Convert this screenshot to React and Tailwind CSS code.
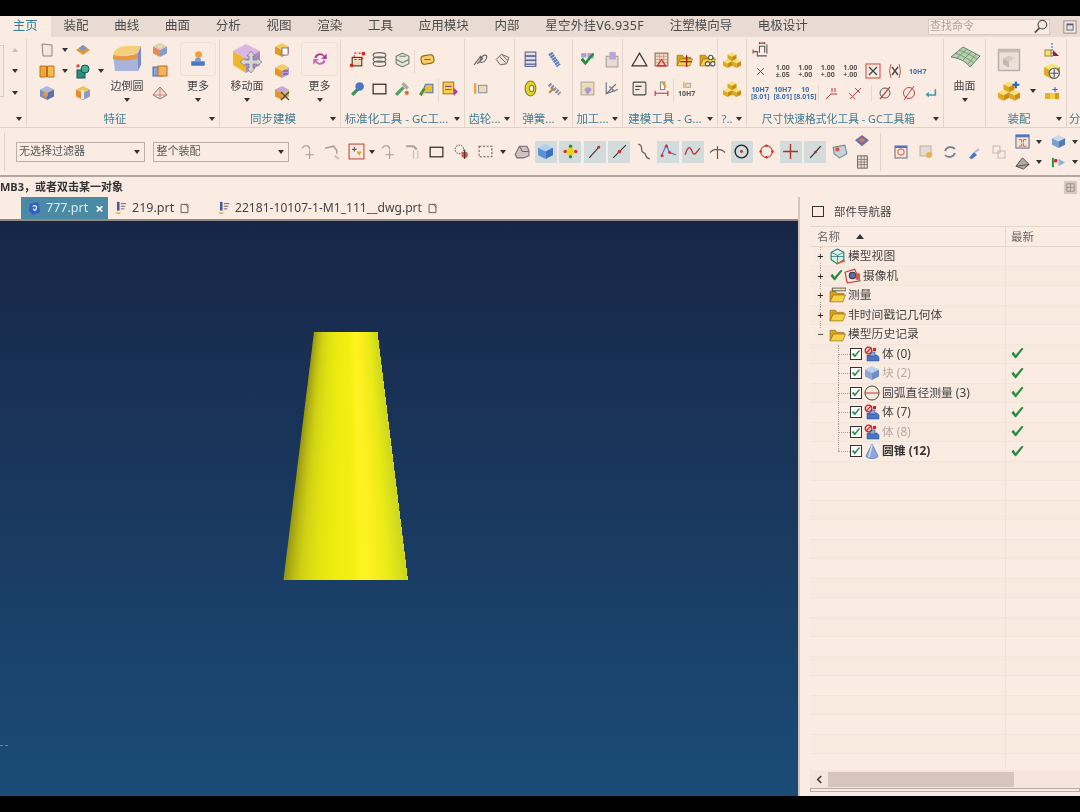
import React from "react"

// isometric cube used all over the ribbon
const cube = (t, l, r) => (
  <>
    <polygon points="8,1 15,4.5 8,8 1,4.5" fill={t} />
    <polygon points="1,4.5 8,8 8,15 1,11.5" fill={l} />
    <polygon points="8,8 15,4.5 15,11.5 8,15" fill={r} />
  </>
)
const goldCubes = (
  <>
    <polygon points="8,1 12,3 8,5 4,3" fill="#f6e27a" /><polygon points="4,3 8,5 8,9 4,7" fill="#e0a820" /><polygon points="8,5 12,3 12,7 8,9" fill="#c98e10" />
    <polygon points="4,7 8,9 4,11 0,9" fill="#f6e27a" /><polygon points="0,9 4,11 4,15 0,13" fill="#e0a820" /><polygon points="4,11 8,9 8,13 4,15" fill="#c98e10" />
    <polygon points="12,7 16,9 12,11 8,9" fill="#f6e27a" /><polygon points="8,9 12,11 12,15 8,13" fill="#e0a820" /><polygon points="12,11 16,9 16,13 12,15" fill="#c98e10" />
  </>
)
const check = <path d="M2 8.5 L6 13 L14 3 L12.5 2.5 L6 10 L3.5 6.5 Z" fill="#1f8a3c" stroke="#1f8a3c" strokeWidth="0.8" />
const folder = (
  <>
    <path d="M1 14 V4 H6 L7.5 6 H14 V8 H4.5 Z" fill="#d9a21b" stroke="#8a6410" strokeWidth="0.6" />
    <path d="M1 14 L4 7.5 H15.5 L13 14 Z" fill="#f7d048" stroke="#8a6410" strokeWidth="0.6" />
  </>
)
const bodyIcon = (
  <>
    <path d="M3 9 H13 L15 11 V15 H3 Z" fill="#4a76c4" stroke="#26457f" strokeWidth="0.5" />
    <rect x="6" y="6" width="5" height="4" fill="#8aa8dc" stroke="#26457f" strokeWidth="0.5" />
    <circle cx="4.5" cy="4.5" r="3.3" fill="none" stroke="#d92020" strokeWidth="1.3" />
    <path d="M2 7 L7 2" stroke="#d92020" strokeWidth="1.2" />
    <rect x="9" y="2" width="3" height="3" fill="#d92020" />
  </>
)

const icons = {
  sheet: <path d="M3 2 L13 3 V14 L4 14 Z" fill="#f4e6de" stroke="#8c8480" />,
  gem: <><polygon points="8,3 15,8 8,13 1,8" fill="#d99b3d" /><polygon points="8,3 12,6 8,9 4,6" fill="#7d93c9" /></>,
  book: <><path d="M1 3 H7.5 V14 H1 Z" fill="#f0a830" stroke="#b8701a" /><path d="M8.5 3 H15 V14 H8.5 Z" fill="#f5bd55" stroke="#b8701a" /></>,
  target: <><rect x="2" y="7" width="8" height="8" fill="#2d8c83" stroke="#14544e" /><circle cx="10" cy="6" r="4" fill="#49b08f" stroke="#14544e" /><path d="M1 3 H5 M3 1 V5" stroke="#d92020" /></>,
  blueBox: <>{cube("#a9b9e0", "#7c8fc6", "#5c70ad")}<circle cx="6.5" cy="9.5" r="2.5" fill="#e9963a" /></>,
  halfBox: <>{cube("#f0c25a", "#e58c35", "#8b9bc7")}<rect x="6" y="5" width="3" height="9" fill="#fbece3" /></>,
  tray: <>{cube("#d6c8c2", "#e58c55", "#8b9bc7")}<polygon points="4,4.5 8,2.8 12,4.5 8,6.5" fill="#f5dc9a" /></>,
  frame: <><rect x="1" y="4" width="9" height="9" fill="#8ba3d6" stroke="#50689f" /><rect x="6" y="3" width="9" height="10" fill="#f2b25a" stroke="#b8701a" /></>,
  pyramid: <><polygon points="8,2 15,10 8,14 1,10" fill="#f2ded4" stroke="#8c7f7a" /><path d="M8 2 V14 M1 10 L15 10" stroke="#c06a50" strokeWidth="0.7" /></>,
  stamp: <><rect x="2" y="10" width="12" height="4" fill="#4a76c4" /><path d="M5 10 L6 7 H10 L11 10 Z" fill="#7f9bd3" /><circle cx="8.5" cy="4" r="3" fill="#eda035" /></>,
  yCube: <>{cube("#f4cb63", "#e09a24", "#cf8ed0")}<rect x="8" y="6" width="6" height="7" fill="#fdfdfb" stroke="#5c5c5c" strokeWidth="0.7" /></>,
  yCube2: <>{cube("#f4cb63", "#e09a24", "#b99ad6")}<path d="M9 8 H14 M9 11 H14" stroke="#555" /></>,
  xCube: <>{cube("#c6a6da", "#e09a24", "#d9b565")}<path d="M7 7 L15 15 M15 7 L7 15" stroke="#444" strokeWidth="1.2" /></>,
  loop: <><path d="M3 7 A5 5 0 0 1 12 5 L14 3 V8 H9 L11 6 A3.5 3.5 0 0 0 5 7 Z" fill="#b0409c" /><path d="M13 9 A5 5 0 0 1 4 11 L2 13 V8 H7 L5 10 A3.5 3.5 0 0 0 11 9 Z" fill="#c66bb5" /></>,
  bracket: <><rect x="3" y="6" width="9" height="8" fill="#f7d9b8" stroke="#333" /><rect x="5" y="2" width="8" height="6" fill="none" stroke="#d92020" strokeDasharray="2 2" /><rect x="1" y="12" width="3" height="3" fill="#d92020" /><rect x="12" y="1" width="3" height="3" fill="#d92020" /></>,
  layers: <g fill="none" stroke="#666" strokeWidth="1.1"><ellipse cx="8" cy="4" rx="6" ry="2.5" /><ellipse cx="8" cy="8" rx="6" ry="2.5" /><ellipse cx="8" cy="12" rx="6" ry="2.5" /></g>,
  layers2: <g fill="#e4e6d8" stroke="#6c7d70"><path d="M2 5 L8 2 L14 5 V12 L8 15 L2 12 Z" /><path d="M2 8 L8 11 L14 8 M5 5 H11" fill="none" /></g>,
  tag: <><rect x="2" y="4" width="12" height="8" rx="3" fill="#f6cf66" stroke="#8a6410" transform="rotate(-10 8 8)" /><path d="M5 8 H11" stroke="#8a6410" /></>,
  wrench: <><path d="M3 14 L9 8" stroke="#3f8f4e" strokeWidth="3" /><circle cx="10" cy="6" r="4" fill="#4a76c4" /></>,
  rect: <rect x="2" y="4" width="12" height="9" fill="#fbece3" stroke="#333" strokeWidth="1.2" />,
  tool: <><path d="M2 14 L9 7" stroke="#54a062" strokeWidth="3" /><path d="M8 3 L13 8" stroke="#aaa" strokeWidth="3" /><circle cx="12" cy="12" r="2" fill="#d96d30" /></>,
  flag: <><path d="M3 15 L7 4 H14 V12 H7" fill="#e6c02d" stroke="#4a76c4" /><path d="M2 14 L6 8" stroke="#3f8f4e" strokeWidth="2.5" /></>,
  sign: <><rect x="1" y="2" width="10" height="11" fill="#f7d048" stroke="#a07a20" /><path d="M3 6 H9 M3 9 H9" stroke="#8c4aa0" /><polygon points="11,7 15,11 11,15" fill="#b0409c" /></>,
  pen: <path d="M2 13 L8 5 L10 7 L5 12 M7 10 C10 3 13 3 14 5 C14 9 10 12 7 10" fill="none" stroke="#666" strokeWidth="1.1" />,
  feather: <path d="M2 8 L7 3 L14 6 L12 12 L6 13 Z M5 5 L11 11 M8 4 L13 9" fill="#eee2da" stroke="#666" strokeWidth="0.9" />,
  gear: <><rect x="2" y="3" width="2" height="10" fill="#e7a13a" /><rect x="6" y="5" width="8" height="7" fill="#f0d9b0" stroke="#8791ad" /></>,
  coil: <><ellipse cx="8" cy="8" rx="5" ry="7" fill="#e6d426" stroke="#8a7a10" /><ellipse cx="9" cy="8" rx="2" ry="3" fill="#fff" stroke="#8a7a10" /></>,
  stack: <g fill="#dfe2ee" stroke="#59628a"><rect x="3" y="1" width="10" height="3.5" /><rect x="3" y="5" width="10" height="3.5" /><rect x="3" y="9" width="10" height="3.5" /><rect x="3" y="12.5" width="10" height="2" /></g>,
  spring: <path d="M4 2 L12 14" stroke="#5a7cc0" strokeWidth="4.5" strokeDasharray="2 0.6" />,
  plug: <><path d="M3 4 L13 13" stroke="#8c8ca0" strokeWidth="4" strokeDasharray="2 1" /><path d="M3 12 L7 8" stroke="#c08040" strokeWidth="2" /></>,
  checkShape: <><rect x="8" y="2" width="6" height="5" fill="#a99bd6" /><rect x="2" y="2" width="5" height="4" fill="#a99bd6" />{check}</>,
  doc2: <><rect x="3" y="5" width="11" height="10" fill="#e6dcd6" stroke="#a79d99" /><rect x="6" y="1" width="6" height="7" fill="#b6a6d8" /></>,
  doc3: <><rect x="2" y="2" width="12" height="12" fill="#ecdcb8" stroke="#b0a49a" /><path d="M5 9 C7 6 10 6 12 9 L8 14 Z" fill="#a99bd6" /></>,
  axes: <><path d="M3 2 V13 L14 9 M3 13 L12 4" fill="none" stroke="#5c6f70" /><path d="M6 6 L11 11" stroke="#8c7fb6" strokeWidth="1.5" /></>,
  triangle: <polygon points="8,2 15,14 1,14" fill="none" stroke="#333" strokeWidth="1.1" />,
  table: <><rect x="2" y="2" width="12" height="12" fill="#f4d9c7" stroke="#7a6a60" /><path d="M2 5 H14 M2 8 H14 M2 11 H14 M6 2 V14 M10 2 V14" stroke="#b98870" strokeWidth="0.6" /><polygon points="8,8 12,14 4,14" fill="none" stroke="#d92020" /></>,
  foldPlus: <>{folder}<path d="M10 4 V15 M4 10 H15" stroke="#a02020" strokeWidth="1.3" /></>,
  foldTree: <>{folder}<circle cx="11" cy="6" r="2" fill="#fff" stroke="#555" /><circle cx="8" cy="12" r="2" fill="#fff" stroke="#555" /><circle cx="13" cy="12" r="2" fill="#fff" stroke="#555" /></>,
  gold: goldCubes,
  goldPlus: <>{goldCubes}<path d="M13 1 V6 M10.5 3.5 H15.5" stroke="#2a62c0" strokeWidth="1.5" /></>,
  note: <><rect x="2" y="2" width="12" height="12" rx="1" fill="#f2e8e0" stroke="#444" /><path d="M4 6 H10 M4 9 H8" stroke="#444" /></>,
  measure: <><rect x="7" y="2" width="4" height="7" fill="#fff" stroke="#888" /><path d="M9 2 L12 7" stroke="#e2a030" strokeWidth="2" /><path d="M2 10 V15 M14 10 V15 M2 12.5 H14" stroke="#c03030" /></>,
  lines: <><path d="M1 10 H5 V14 H14 M7 11 V5 H12 V11 M7 2 H12 M14 3 V12" fill="none" stroke="#555" /><path d="M7 1 V3 M12 1 V3 M1 8 V12" stroke="#c03030" /></>,
  cross: <path d="M3 3 L13 13 M13 3 L3 13" stroke="#444" strokeWidth="1.3" />,
  xBox: <><rect x="1" y="1" width="14" height="14" fill="none" stroke="#c65a4a" strokeWidth="1.1" /><path d="M4 4 L12 12 M12 4 L4 12" stroke="#444" strokeWidth="1.3" /></>,
  xParen: <><path d="M4 1 Q1 8 4 15 M12 1 Q15 8 12 15" fill="none" stroke="#c65a4a" /><path d="M5 4 L11 12 M11 4 L5 12" stroke="#444" strokeWidth="1.3" /></>,
  dim: <><path d="M3 14 L8 9 H14" fill="none" stroke="#c03030" /><path d="M9 3 L9 7 M12 3 L12 7" stroke="#c03030" /></>,
  dimSlash: <path d="M3 14 L14 3 M2 8 L8 14 M8 3 L13 8" fill="none" stroke="#c04040" />,
  diaRed: <><circle cx="8" cy="8" r="5" fill="none" stroke="#555" /><path d="M3 14 L13 2" stroke="#c04040" strokeWidth="1.2" /></>,
  diaPink: <><circle cx="8" cy="8" r="5.5" fill="none" stroke="#c04040" /><path d="M3 15 L13 1" stroke="#c04040" /></>,
  back: <path d="M13 4 V10 H6 V7 L2 10.5 L6 14 V12 H15 V4 Z" fill="#4b93a8" />,
  greyDoc: <><rect x="1" y="1" width="14" height="14" fill="#ebe0da" stroke="#b9aea8" /><rect x="1" y="1" width="14" height="2" fill="#c9bcb6" /><polygon points="8,5 12,7 8,9 4,7" fill="#d6cbc5" /><polygon points="4,7 8,9 8,13 4,11" fill="#c4b8b2" /></>,
  mirror: <><path d="M8 1 V15" stroke="#2a62c0" strokeDasharray="2 1" /><rect x="1" y="8" width="6" height="6" fill="#f6e27a" stroke="#9c8a20" /><polygon points="9,14 15,14 9,8" fill="#a02020" /></>,
  moveAsm: <>{cube("#f6e27a", "#e0a820", "#c98e10")}<circle cx="10" cy="10" r="4.5" fill="#eee" stroke="#555" /><path d="M10 6.5 V13.5 M6.5 10 H13.5" stroke="#555" /></>,
  smallGold: <><rect x="1" y="8" width="5" height="6" fill="#e9b02a" /><rect x="6" y="8" width="5" height="6" fill="#f4ca55" /><rect x="11" y="8" width="4" height="6" fill="#d49a18" /><path d="M11 2 V7 M8.5 4.5 H13.5" stroke="#2a62c0" /></>,
  hook: <><path d="M2 5 L10 3 L13 7 V10" fill="none" stroke="#ad9e98" strokeWidth="1.4" /><path d="M11 12 L15 15" stroke="#cbbeb8" strokeWidth="2" /></>,
  filterBox: <><rect x="1" y="1" width="14" height="14" fill="#f8e8df" stroke="#c04a3a" /><path d="M4 6 H8 M6 4 V8" stroke="#555" /><polygon points="8,8 13,8 10.5,12" fill="#d8a828" /></>,
  curlPlus: <><path d="M3 5 C5 1 10 2 10 6" fill="none" stroke="#b0a49e" strokeWidth="1.3" /><path d="M10 7 V15 M6 11 H14" stroke="#a69a94" /></>,
  hammer: <><path d="M2 3 H9 L12 6" stroke="#b0a49e" strokeWidth="2" fill="none" /><path d="M9 7 V15 M13 7 V15" stroke="#c5b9b3" /></>,
  dotRect: <><circle cx="6" cy="6" r="4" fill="none" stroke="#777" strokeDasharray="1.5 1" /><circle cx="11" cy="11" r="3" fill="#d85a3a" /><path d="M11 6 V15" stroke="#333" /></>,
  dashRect: <rect x="2" y="3" width="12" height="10" fill="none" stroke="#5f5f5f" strokeDasharray="2 1.5" />,
  pill: <><path d="M2 11 L6 3 H13 L15 7 V12 L10 14 H4 Z" fill="#cfc3c0" stroke="#6f6a72" /><path d="M6 3 L9 8 H15" fill="none" stroke="#6f6a72" /></>,
  cube: cube("#b2cdf0", "#5a90d6", "#3c70bc"),
  nodes: <><polygon points="8,3 13,8 8,13 3,8" fill="#e9d21c" /><g fill="#d03030"><circle cx="3" cy="8" r="1.6" /><circle cx="13" cy="8" r="1.6" /></g><g fill="#2a8c40"><circle cx="8" cy="3" r="1.6" /><circle cx="8" cy="13" r="1.6" /></g></>,
  lineEnd: <><path d="M3 14 L13 3" stroke="#333" /><circle cx="12" cy="4" r="1.4" fill="#d03030" /></>,
  lineMid: <><path d="M2 14 L14 2" stroke="#333" /><circle cx="8" cy="8" r="1.7" fill="#d03030" /></>,
  squiggle: <path d="M3 1 C9 2 4 8 8 9 C12 10 8 14 14 15" fill="none" stroke="#6c5c5a" strokeWidth="1.2" />,
  zig: <><path d="M1 13 L6 2 L9 9 L15 11" fill="none" stroke="#5567b0" /><g fill="#d03030"><circle cx="6" cy="3" r="1.4" /><circle cx="9" cy="9" r="1.4" /><circle cx="2" cy="12" r="1.4" /></g></>,
  wave: <path d="M1 11 C4 2 6 3 8 9 C10 13 12 8 15 5" fill="none" stroke="#c03030" strokeWidth="1.3" />,
  branch: <path d="M8 15 V3 M1 9 C4 5 12 5 15 9" fill="none" stroke="#6c5c5a" strokeWidth="1.2" />,
  centerDot: <><circle cx="8" cy="8" r="6" fill="none" stroke="#222" strokeWidth="1.3" /><circle cx="8" cy="8" r="1.4" fill="#c03030" /></>,
  circleDots: <><circle cx="8" cy="8" r="5.5" fill="none" stroke="#d85040" strokeWidth="1.2" /><g fill="#c03030"><circle cx="8" cy="2.5" r="1.2" /><circle cx="8" cy="13.5" r="1.2" /><circle cx="2.5" cy="8" r="1.2" /><circle cx="13.5" cy="8" r="1.2" /></g></>,
  plus: <path d="M8 1 V15 M1 8 H15" stroke="#b03020" strokeWidth="1.3" />,
  lineRed: <><path d="M3 14 L13 3" stroke="#333" strokeWidth="1.2" /><circle cx="8" cy="8.5" r="1.3" fill="#b03020" /></>,
  wedge: <><path d="M2 4 L13 2 L15 10 L8 14 L3 10 Z" fill="#c4d2e0" stroke="#78848c" /><circle cx="6" cy="6" r="2" fill="#d85a3a" /></>,
  panel: <><polygon points="8,1 16,7 8,14 0,7" fill="#6f6fa8" /><polygon points="8,4 12,7 8,10 4,7" fill="#d07a5a" /></>,
  mesh: <><rect x="3" y="1" width="11" height="14" fill="#f2e2d8" stroke="#555" /><path d="M3 5 H14 M3 8 H14 M3 11 H14 M7 1 V15 M10.5 1 V15" stroke="#555" strokeWidth="0.7" /></>,
  viewZoom: <><rect x="2" y="2" width="12" height="12" fill="#f5e5dc" stroke="#6a6a80" /><circle cx="8" cy="8" r="3.2" fill="none" stroke="#d85a3a" /><rect x="2" y="2" width="12" height="2" fill="#4a76c4" /></>,
  viewHand: <><rect x="2" y="2" width="11" height="10" fill="#e4dcd4" stroke="#b9aea8" /><circle cx="11" cy="11" r="3" fill="#eab24a" /></>,
  refresh: <path d="M13 5 A6 6 0 0 0 3 7 M3 11 A6 6 0 0 0 13 9" fill="none" stroke="#6f7f8c" strokeWidth="1.8" />,
  brush: <><path d="M2 14 L7 8 L10 11 L5 15 Z" fill="#4a76c4" /><path d="M8 8 L12 5" stroke="#b0b8c8" strokeWidth="2" /></>,
  faint: <><rect x="2" y="2" width="7" height="7" fill="none" stroke="#c4b8b2" /><rect x="7" y="7" width="7" height="7" fill="none" stroke="#c4b8b2" /></>,
  viewGrid: <><rect x="1" y="1" width="14" height="14" fill="#f5e3d4" stroke="#4a5f9c" /><rect x="1" y="1" width="14" height="2.5" fill="#4a76c4" /><path d="M4 6 H7 V9 M12 6 H9 V9 M4 13 H7 V10 M12 13 H9 V10" fill="none" stroke="#d85a3a" /></>,
  shaded: cube("#c9d9ec", "#7aa0d0", "#4f7cb8"),
  wedgeGrey: <><path d="M1 12 L8 3 L15 10 L9 15 Z" fill="#b0a8a2" stroke="#55504c" /><path d="M1 12 L9 11 L15 10" fill="none" stroke="#55504c" /></>,
  orient: <><polygon points="8,4 15,8 8,12" fill="#8fb0dc" /><path d="M2 3 V13" stroke="#2a8c40" strokeWidth="2" /><circle cx="5" cy="6" r="2" fill="#d03030" /></>,
  body: bodyIcon,
  check,
  folder,
  block: cube("#bccfec", "#8aa7d6", "#6d8dc4"),
  view: <><path d="M8 1 L14 4 V11 L8 15 L2 11 V4 Z" fill="#d8f0e6" stroke="#1c7a70" /><path d="M2 4 L8 7 L14 4 M8 7 V15 M2 8 L14 8" fill="none" stroke="#1c7a70" strokeWidth="0.7" /><path d="M7 15 L15 12" stroke="#e25a20" strokeWidth="1.3" /></>,
  camera: <><path d="M1 5 L10 2 L15 13 L3 15 Z" fill="#f8e8df" stroke="#c03030" /><circle cx="8" cy="8" r="3" fill="#5a70b0" stroke="#333" /><rect x="11" y="6" width="4" height="6" fill="#d85a3a" /></>,
  ruler: <>{folder}<rect x="3" y="1" width="13" height="2.6" fill="#f4e6b0" stroke="#333" strokeWidth="0.7" /></>,
  arcDia: <><circle cx="8" cy="8" r="7" fill="none" stroke="#444" /><path d="M1.5 8 H14.5" stroke="#c03030" /></>,
  cone: <><path d="M8 1 L14 13 A6 2.5 0 0 1 2 13 Z" fill="#8aa7d6" stroke="#6d8dc4" /><path d="M8 2 L5 14" stroke="#d4e0f2" strokeWidth="1.4" /></>,
  partTab: <><path d="M3 3 L12 1 L14 12 L6 15 L2 10 Z" fill="#2f62c0" /><path d="M6 6 C8 4 11 5 10 8 C9 11 7 10 7 8" fill="none" stroke="#e2ecf8" strokeWidth="1.4" /></>,
  drawTab: <><path d="M6 1 V11" stroke="#4a5aa0" strokeWidth="3" /><path d="M9 3 H15 M9 6 H14 M9 9 H13" stroke="#555" /><path d="M2 13 H10 L6 15 Z" fill="#d8a828" /></>,
  openDoc: <><path d="M3 2 H9 L13 6 V14 H3 Z" fill="none" stroke="#444" strokeWidth="1.2" /><path d="M8 2 L13 2 M13 2 V7" stroke="#444" /></>,
  search: <><circle cx="10" cy="6" r="4.6" fill="#f4e6de" stroke="#555" strokeWidth="1.3" /><path d="M7 9.5 L2 14.5" stroke="#555" strokeWidth="2" /></>,
  win: <><rect x="1" y="1" width="14" height="14" fill="#f4e6de" stroke="#8c8480" /><rect x="4" y="4" width="8" height="8" fill="#46607c" /><rect x="5" y="6" width="6" height="5" fill="#e8dcd4" /></>,
  checkFlag: <><rect x="1" y="1" width="14" height="14" fill="#d6c8c2" /><path d="M4 4 H12 V12 H4 Z M4 8 H12 M8 4 V12" stroke="#9c908a" fill="none" /></>,
}

const Ic = ({ n, s = 16 }) => (
  <svg viewBox="0 0 16 16" width={s} height={s} className="shrink-0">{icons[n]}</svg>
)

const Arrow = () => <span className="w-0 h-0 border-x-[3px] border-x-transparent border-t-[4px] border-t-[#333]" />

// one icon cell in a ribbon column (three rows of 21.5px or two rows of 29px)
const C3 = ({ n, s }) => <div className="h-[21.5px] flex items-center justify-center">{n && <Ic n={n} s={s} />}</div>
const C2 = ({ n, s = 17 }) => <div className="h-[29px] flex items-center justify-center">{n && <Ic n={n} s={s} />}</div>
const A3 = () => <div className="h-[21.5px] flex items-center justify-center"><Arrow /></div>
const Sep = () => <div className="h-[23px] mt-[3px] border-l border-[#e6d8cf]" />

const Group = ({ width, label, labelClass = "", last, children }) => (
  <div className={`${width} shrink-0 flex flex-col ${last ? "" : "border-r border-[#e3d5cc]"}`}>
    <div className="h-[72px] flex">{children}</div>
    <div className="h-[16px] flex items-center text-[11.5px] text-[#3f7c92] whitespace-nowrap overflow-hidden">
      <span className={`flex-1 text-center ${labelClass}`}>{label}</span>
      <span className="mr-[4px] flex"><Arrow /></span>
    </div>
  </div>
)

const Caption = ({ text }) => (
  <>
    <div className="h-[14px] flex items-center justify-center text-[11px] text-[#444] whitespace-nowrap">{text}</div>
    <div className="h-[14px] flex items-center justify-center"><Arrow /></div>
  </>
)

const More = ({ n, width }) => (
  <div className={`${width} shrink-0`}>
    <div className="mt-[3px] mb-[3px] h-[34px] border border-[#eee0d8] rounded-[3px] flex items-center justify-center"><Ic n={n} s={18} /></div>
    <Caption text="更多" />
  </div>
)

const Dim = ({ a, b, c = "text-[#555]" }) => (
  <div className={`w-[22.5px] shrink-0 text-center leading-[7px] text-[7px] font-bold whitespace-nowrap ${c}`}>{a}<br />{b}</div>
)

const tabs = ["主页", "装配", "曲线", "曲面", "分析", "视图", "渲染", "工具", "应用模块", "内部", "星空外挂V6.935F", "注塑模向导", "电极设计"]

const selIcons = [
  ["curlPlus"], ["hook"], ["filterBox"], "a", ["curlPlus"], ["hammer"], ["rect"], ["dotRect"], ["dashRect"], "b",
  ["pill"], ["cube", 1], ["nodes", 1], ["lineEnd", 1], ["lineMid", 1], ["squiggle"], ["zig", 1], ["wave", 1], ["branch"],
  ["centerDot", 1], ["circleDots"], ["plus", 1], ["lineRed", 1], ["wedge"],
]

const rows = [
  { kind: "top", icon: "view", text: "模型视图", open: false },
  { kind: "top", tick: true, icon: "camera", text: "摄像机" },
  { kind: "top", icon: "ruler", text: "测量" },
  { kind: "top", icon: "folder", text: "非时间戳记几何体" },
  { kind: "top", icon: "folder", text: "模型历史记录", open: true },
  { kind: "child", icon: "body", text: "体 (0)" },
  { kind: "child", icon: "block", text: "块 (2)", faint: true },
  { kind: "child", icon: "arcDia", text: "圆弧直径测量 (3)" },
  { kind: "child", icon: "body", text: "体 (7)" },
  { kind: "child", icon: "body", text: "体 (8)", faint: true },
  { kind: "child", icon: "cone", text: "圆锥 (12)", bold: true, end: true },
]

// colour stops across the cone, left silhouette to right silhouette
const coneStops = [
  [0, [150, 150, 18]], [0.06, [180, 180, 20]], [0.14, [208, 208, 20]], [0.26, [226, 226, 18]], [0.4, [238, 236, 16]],
  [0.56, [244, 238, 18]], [0.64, [255, 242, 36]], [0.72, [254, 238, 32]], [0.86, [232, 234, 24]], [1, [204, 214, 30]],
]
const coneColor = (t) => {
  let i = 0
  while (i < coneStops.length - 2 && t > coneStops[i + 1][0]) i++
  const [t0, c0] = coneStops[i]
  const [t1, c1] = coneStops[i + 1]
  const k = (t - t0) / (t1 - t0)
  return `rgb(${c0.map((v, j) => Math.round(v + (c1[j] - v) * k)).join(",")})`
}
const STRIPS = 50
const Cone = () => (
  <svg width="125" height="249" viewBox="0 0 125 249" className="block">
    {Array.from({ length: STRIPS }).map((_, i) => {
      const a = i / STRIPS
      return (
        <polygon
          key={i}
          points={`${31 + 63 * a},0 94,0 124.5,248 ${0.5 + 124 * a},248`}
          fill={coneColor(a + 0.5 / STRIPS)}
        />
      )
    })}
  </svg>
)

const TreeRow = ({ row, i }) => {
  const shade = i % 2 === 0 ? "bg-[#fbece3]" : "bg-[#f9eae0]"
  return (
    <div className={`h-[19.5px] flex border-b border-[#f3e3d9] ${shade}`}>
      <div className="w-[196px] shrink-0 flex items-center border-r border-[#f1e1d7] overflow-hidden">
        {row && row.kind === "top" && (
          <>
            <div className="w-[19px] h-full relative shrink-0">
              <span className={`absolute left-[10px] top-0 border-l border-dotted border-[#a9a09a] ${i === 4 ? "h-1/2" : "h-full"}`} />
              <span className="absolute left-[5px] top-[4px] w-[11px] h-[11px] bg-[#f8e9df] text-[#222] text-[11px] leading-[10px] text-center">{row.open ? "−" : "+"}</span>
            </div>
            {row.tick && <Ic n="check" s={15} />}
            <Ic n={row.icon} s={17} />
            <span className="ml-[2px] text-[11.8px] text-[#444] whitespace-nowrap">{row.text}</span>
          </>
        )}
        {row && row.kind === "child" && (
          <>
            <div className="w-[40px] h-full relative shrink-0">
              <span className={`absolute left-[28px] top-0 ${row.end ? "h-1/2" : "h-full"} border-l border-dotted border-[#a9a09a]`} />
              <span className="absolute left-[28px] top-1/2 w-[12px] border-t border-dotted border-[#a9a09a]" />
            </div>
            <span className="w-[12px] h-[12px] bg-white border border-[#333] flex items-center justify-center shrink-0"><Ic n="check" s={10} /></span>
            <span className="ml-[2px]"><Ic n={row.icon} s={16} /></span>
            <span className={`ml-[2px] text-[11.8px] whitespace-nowrap ${row.faint ? "text-[#b5aaa4]" : row.bold ? "font-bold text-[#333]" : "text-[#444]"}`}>{row.text}</span>
          </>
        )}
      </div>
      <div className="flex-1 flex items-center pl-[4px]">
        {row && row.kind === "child" && <Ic n="check" s={15} />}
      </div>
    </div>
  )
}

export default function App() {
  const font = { fontFamily: '"Noto Sans", "Noto Sans CJK SC", sans-serif' }
  return (
    <div className="w-[1080px] h-[812px] bg-black overflow-hidden flex flex-col pt-[16px] pb-[16px] blur-[0.4px]" style={font}>
      <div className="flex-1 bg-[#fbece3] flex flex-col min-h-0">
        {/* menu tabs */}
        <div className="h-[21px] bg-[#e9dbd2] flex items-center shrink-0">
          {tabs.map((t, i) => (
            <div key={t} className={`px-[12.87px] h-full flex items-center text-[12.5px] whitespace-nowrap ${i === 0 ? "bg-[#fbece3] text-[#2f7f98]" : "text-[#4a4a4a]"} ${i === 10 ? "tracking-[0.25px]" : ""}`}>{t}</div>
          ))}
          <div className="ml-auto w-[122px] h-[16px] mr-[3px] bg-[#fbece3] border border-[#d8c9c0] flex items-center justify-between text-[11px] text-[#a89e98] px-[1px]">
            查找命令<Ic n="search" s={15} />
          </div>
          <span className="mr-[3px] ml-[10px]"><Ic n="win" s={14} /></span>
        </div>

        {/* ribbon */}
        <div className="h-[91px] pt-[2px] shrink-0 flex border-b border-[#e0d2c9] overflow-hidden">
          <Group width="w-[27px]" label="">
            <div className="w-[4px] h-[52px] mt-[6px] border border-l-0 border-[#d9cbc3]" />
            <div className="w-[22px]"><div className="h-[21.5px] flex items-center justify-center"><span className="w-0 h-0 border-x-[3px] border-x-transparent border-b-[4px] border-b-[#c9bdb6]" /></div><A3 /><A3 /></div>
          </Group>

          <Group width="w-[193px]" label="特征" labelClass="pr-[6px]">
            <div className="w-[22px] ml-[9px]"><C3 n="sheet" /><C3 n="book" /><C3 n="blueBox" /></div>
            <div className="w-[14px]"><A3 /><A3 /><C3 /></div>
            <div className="w-[22px]"><C3 n="gem" /><C3 n="target" /><C3 n="halfBox" /></div>
            <div className="w-[14px]"><C3 /><A3 /><C3 /></div>
            <div className="w-[38px]">
              <div className="h-[40px] flex items-center justify-center">
                <svg viewBox="0 0 32 32" width="32" height="32">
                  <path d="M2 12 C4 5 10 3 16 3 H30 L27 10 C24 12 8 12 2 12Z" fill="#f4cf78" />
                  <path d="M2 12 C8 13 22 13 27 10 V28 L4 28 Z" fill="#a8b4dc" />
                  <path d="M2 12 C8 14 22 14 27 10 L27 15 C22 18 8 18 2 16Z" fill="#e89a3a" />
                  <path d="M27 10 L30 3 V22 L27 28Z" fill="#7d8cc6" />
                </svg>
              </div>
              <Caption text="边倒圆" />
            </div>
            <div className="w-[22px] ml-[3px]"><C3 n="tray" /><C3 n="frame" /><C3 n="pyramid" /></div>
            <div className="ml-[9px]"><More n="stamp" width="w-[36px]" /></div>
          </Group>

          <Group width="w-[121px]" label="同步建模" labelClass="pr-[4px]">
            <div className="w-[38px] ml-[8px]">
              <div className="h-[40px] flex items-center justify-center">
                <svg viewBox="0 0 32 32" width="32" height="32">
                  <polygon points="15,1 29,8 15,16 2,8" fill="#dcb6e0" />
                  <polygon points="2,8 15,16 15,30 2,22" fill="#f0b72c" />
                  <polygon points="15,16 29,8 29,22 15,30" fill="#a88acb" />
                  <path d="M20 8 L24 13 H22 V17 H26 V15 L31 19 L26 23 V21 H22 V25 H24 L20 30 L16 25 H18 V21 H14 V23 L9 19 L14 15 V17 H18 V13 H16 Z" fill="#d6d6d6" stroke="#777" strokeWidth="0.7" />
                </svg>
              </div>
              <Caption text="移动面" />
            </div>
            <div className="w-[22px] ml-[5px]"><C3 n="yCube" /><C3 n="yCube2" /><C3 n="xCube" /></div>
            <div className="ml-[8px]"><More n="loop" width="w-[37px]" /></div>
          </Group>

          <Group width="w-[124px]" label="标准化工具 - GC工..." labelClass="pr-[2px]">
            <div className="pt-[6px] flex ml-[5px]">
              <div className="w-[22px]"><C2 n="bracket" /><C2 n="wrench" /></div>
              <div className="w-[23px]"><C2 n="layers" /><C2 n="rect" /></div>
              <div className="w-[23px]"><C2 n="layers2" /><C2 n="tool" /></div>
              <div className="w-[24px]">
                <div className="h-[29px] flex items-center"><Sep /><span className="ml-[4px]"><Ic n="tag" s={17} /></span></div>
                <C2 n="flag" />
              </div>
              <div className="w-[22px]">
                <C2 />
                <div className="h-[29px] flex items-center"><Sep /><span className="ml-[3px]"><Ic n="sign" s={17} /></span></div>
              </div>
            </div>
          </Group>

          <Group width="w-[50px]" label="齿轮...">
            <div className="pt-[6px] flex ml-[4px]">
              <div className="w-[22px]"><C2 n="pen" /><C2 n="gear" /></div>
              <div className="w-[22px]"><C2 n="feather" /><C2 /></div>
            </div>
          </Group>

          <Group width="w-[58px]" label="弹簧...">
            <div className="pt-[6px] flex ml-[4px]">
              <div className="w-[22px]"><C2 n="stack" /><C2 n="coil" /></div>
              <div className="w-[26px]"><C2 n="spring" /><C2 n="plug" /></div>
            </div>
          </Group>

          <Group width="w-[50px]" label="加工...">
            <div className="pt-[6px] flex ml-[2px]">
              <div className="w-[24px]"><C2 n="checkShape" /><C2 n="doc3" /></div>
              <div className="w-[24px]"><C2 n="doc2" /><C2 n="axes" /></div>
            </div>
          </Group>

          <Group width="w-[95px]" label="建模工具 - G...">
            <div className="pt-[6px] flex ml-[5px]">
              <div className="w-[22px]"><C2 n="triangle" /><C2 n="note" /></div>
              <div className="w-[23px]"><C2 n="table" /><C2 n="measure" /></div>
              <div className="w-[23px]">
                <C2 n="foldPlus" />
                <div className="h-[29px] flex items-center">
                  <Sep />
                  <div className="ml-[4px] flex flex-col items-center text-[7px] leading-[7px] font-bold text-[#555]"><Ic n="gear" s={10} />10H7</div>
                </div>
              </div>
              <div className="w-[22px]"><C2 n="foldTree" /><C2 /></div>
            </div>
          </Group>

          <Group width="w-[29px]" label="?..">
            <div className="pt-[6px] pl-[4px] w-[24px]"><C2 n="gold" s={18} /><C2 n="gold" s={18} /></div>
          </Group>

          <Group width="w-[197px]" label="尺寸快速格式化工具 - GC工具箱" labelClass="text-[10.8px] pr-[3px]">
            <div className="pl-[2px]">
              <div className="h-[21.5px] flex items-center"><div className="w-[22.5px] flex justify-center"><Ic n="lines" s={17} /></div></div>
              <div className="h-[21.5px] flex items-center">
                <div className="w-[22.5px] flex justify-center"><Ic n="cross" s={11} /></div>
                <Dim a="1.00" b="±.05" />
                <Dim a="1.00" b="+.00" />
                <Dim a="1.00" b="+.00" />
                <Dim a="1.00" b="+.00" />
                <div className="w-[22.5px] flex justify-center"><Ic n="xBox" /></div>
                <div className="w-[22.5px] flex justify-center"><Ic n="xParen" /></div>
                <Dim a="10H7" b="" c="text-[#3f6fa8]" />
              </div>
              <div className="h-[21.5px] flex items-center">
                <Dim a="10H7" b="[8.01]" c="text-[#3f6fa8]" />
                <Dim a="10H7" b="[8.01]" c="text-[#3f6fa8]" />
                <Dim a="10" b="[8.015]" c="text-[#3f6fa8]" />
                <div className="w-[25px] flex justify-center border-l border-[#e6d8cf] ml-[1px]"><Ic n="dim" /></div>
                <div className="w-[24px] flex justify-center"><Ic n="dimSlash" /></div>
                <div className="w-[27px] flex justify-center border-l border-[#e6d8cf] ml-[4px]"><Ic n="diaRed" /></div>
                <div className="w-[22px] flex justify-center"><Ic n="diaPink" /></div>
                <div className="w-[22px] flex justify-center"><Ic n="back" s={13} /></div>
              </div>
            </div>
          </Group>

          <div className="w-[42px] shrink-0 border-r border-[#e3d5cc]">
            <div className="h-[40px] flex items-center justify-center">
              <svg viewBox="0 0 32 32" width="32" height="32">
                <path d="M2 14 L14 4 L31 13 L21 24 C16 17 8 15 2 14Z" fill="#b9d0aa" stroke="#5c8570" />
                <path d="M6 10 C12 12 20 16 25 20 M10 7 C16 9 24 13 28 16 M8 15 L18 6 M14 17 L23 8 M19 21 L27 11" fill="none" stroke="#5c8570" strokeWidth="0.7" />
              </svg>
            </div>
            <Caption text="曲面" />
          </div>

          <Group width="w-[81px]" label="装配" labelClass="pr-[4px]">
            <div className="w-[52px] ml-[3px] pt-[6px]">
              <div className="h-[29px] flex items-center pl-[8px]"><Ic n="greyDoc" s={24} /></div>
              <div className="h-[34px] flex items-center pl-[9px] gap-[10px]"><Ic n="goldPlus" s={22} /><Arrow /></div>
            </div>
            <div className="w-[22px]"><C3 n="mirror" /><C3 n="moveAsm" s={18} /><C3 n="smallGold" /></div>
          </Group>

          <div className="flex-1 flex flex-col overflow-hidden">
            <div className="h-[72px]" />
            <div className="h-[16px] flex items-center pl-[2px] text-[11.5px] text-[#3f7c92]">分</div>
          </div>
        </div>

        {/* selection bar */}
        <div className="h-[49px] shrink-0 flex items-center border-b-2 border-[#b3a89f]">
          <div className="ml-[4px] h-[38px] border-l border-[#e0d2c9]" />
          <div className="ml-[11px] w-[130px] h-[20px] border border-[#bcb1a9] flex items-center justify-between pl-[2px] pr-[4px] text-[11px] text-[#555]">无选择过滤器<Arrow /></div>
          <div className="ml-[8px] w-[136px] h-[20px] border border-[#bcb1a9] flex items-center justify-between pl-[2px] pr-[4px] text-[11px] text-[#555]">整个装配<Arrow /></div>
          <div className="ml-[6px] flex items-center">
            {selIcons.map((it, i) => {
              if (it === "a") return <div key={i} className="w-[7px] flex justify-center"><Arrow /></div>
              if (it === "b") return <div key={i} className="w-[11px] flex justify-center"><Arrow /></div>
              return (
                <div key={i} className="w-[24.5px] flex justify-center">
                  <div className={`w-[22px] h-[22px] flex items-center justify-center ${it[1] ? "bg-[#d3dcdc]" : ""}`}>
                    <Ic n={it[0]} s={17} />
                  </div>
                </div>
              )
            })}
          </div>
          <div className="w-[20px] flex flex-col items-center gap-[7px]"><Ic n="panel" s={14} /><Ic n="mesh" s={14} /></div>
          <div className="ml-[8px] h-[38px] border-l border-[#e0d2c9]" />
          <div className="ml-[8px] flex items-center">
            <div className="w-[24.5px] flex justify-center"><Ic n="viewZoom" s={16} /></div>
            <div className="w-[24.5px] flex justify-center"><Ic n="viewHand" s={16} /></div>
            <div className="w-[24.5px] flex justify-center"><Ic n="refresh" s={16} /></div>
            <div className="w-[24.5px] flex justify-center"><Ic n="brush" s={16} /></div>
            <div className="w-[24.5px] flex justify-center"><Ic n="faint" s={16} /></div>
          </div>
          <div className="w-[22px] flex flex-col items-center gap-[6px]"><Ic n="viewGrid" s={15} /><Ic n="wedgeGrey" s={15} /></div>
          <div className="w-[12px] flex flex-col items-center gap-[16px]"><Arrow /><Arrow /></div>
          <div className="w-[22px] ml-[2px] flex flex-col items-center gap-[6px]"><Ic n="shaded" s={15} /><Ic n="orient" s={15} /></div>
          <div className="w-[10px] ml-[1px] flex flex-col items-center gap-[16px]"><Arrow /><Arrow /></div>
        </div>

        {/* status line */}
        <div className="h-[20px] shrink-0 flex items-center justify-between text-[11px] font-bold text-[#333]">
          <span>MB3，或者双击某一对象</span>
          <span className="mr-[2px]"><Ic n="checkFlag" s={15} /></span>
        </div>

        <div className="flex-1 flex min-h-0">
          {/* graphics window */}
          <div className="w-[800px] shrink-0 flex flex-col border-r-2 border-[#d6c6b8]">
            <div className="h-[24px] shrink-0 flex text-[12.5px] text-[#444] pl-[21px] border-b-2 border-[#8f8a86]">
              <div className="w-[87px] bg-[#4a8aa5] text-[#dfeaee] flex items-center pl-[6px] gap-[4px]">
                <Ic n="partTab" s={15} />777.prt<span className="ml-[3px] text-[15px] leading-none font-bold text-white">×</span>
              </div>
              <div className="flex items-center pl-[5px] gap-[5px] w-[100px]"><Ic n="drawTab" s={14} />219.prt<Ic n="openDoc" s={11} /></div>
              <div className="flex items-center pl-[8px] gap-[5px] text-[12.1px]"><Ic n="drawTab" s={14} />22181-10107-1-M1_111__dwg.prt<Ic n="openDoc" s={11} /></div>
            </div>
            <div className="flex-1 relative bg-gradient-to-b from-[#172647] to-[#1a4c78] pl-[283px] pt-[111px]">
              <Cone />
              <span className="absolute left-0 top-[524px] w-[8px] border-t border-dashed border-[#3aa080]" />
            </div>
          </div>

          {/* part navigator */}
          <div className="flex-1 flex flex-col min-w-0">
            <div className="h-[29px] shrink-0 flex items-center pl-[12px] text-[11.5px] text-[#444]">
              <span className="w-[12px] h-[11px] border-[1.5px] border-[#333]" />
              <span className="ml-[10px]">部件导航器</span>
            </div>
            <div className="flex-1 ml-[10px] flex flex-col min-h-0">
              <div className="h-[21px] shrink-0 flex text-[11.5px] text-[#666] border-y border-[#e5d6cc] bg-[#fbece3]">
                <div className="w-[196px] flex items-center pl-[7px] border-r border-[#e5d6cc]">
                  名称
                  <span className="ml-[16px] w-0 h-0 border-x-[4px] border-x-transparent border-b-[5px] border-b-[#333]" />
                </div>
                <div className="flex-1 flex items-center pl-[5px]">最新</div>
              </div>
              <div className="flex-1 overflow-hidden min-h-0">
                {Array.from({ length: 27 }).map((_, i) => <TreeRow key={i} row={rows[i]} i={i} />)}
              </div>
              <div className="h-[18px] shrink-0 flex items-center bg-[#f5e5dc]">
                <span className="w-[18px] flex justify-center">
                  <svg viewBox="0 0 8 10" width="7" height="9"><path d="M6 1 L2 5 L6 9" fill="none" stroke="#444" strokeWidth="2" /></svg>
                </span>
                <span className="w-[186px] h-[15px] bg-[#d5c5bd]" />
              </div>
              <div className="h-[4px] shrink-0 border border-[#b9aca3] mb-[4px]" />
            </div>
          </div>
        </div>
      </div>
    </div>
  )
}
